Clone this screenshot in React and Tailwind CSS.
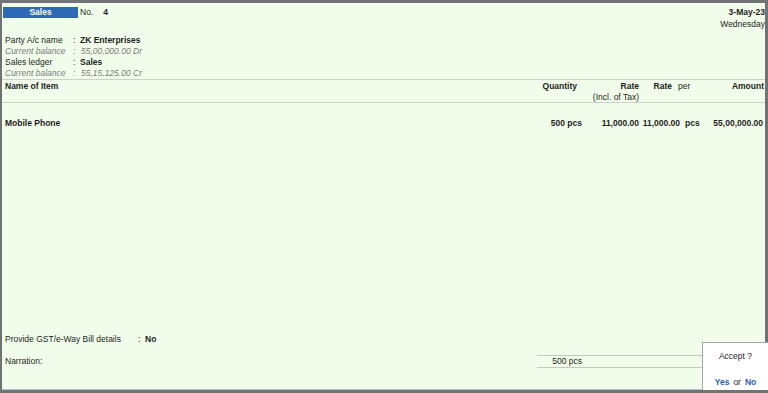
export default function App() {
  const line = "h-[11px] leading-[11px] whitespace-nowrap";

  return (
    <div
      className="relative w-[768px] h-[393px] bg-[#727272] pt-[3px] pl-[2px] pr-[3px] pb-[3px] text-[8.5px] text-[#1e1e1e]"
      style={{ fontFamily: '"Liberation Sans", Arial, sans-serif' }}
    >
      <div className="h-full flex flex-col bg-[#f1fdea] border-b border-[#a9c5d6]">
        {/* voucher header */}
        <div className="flex justify-between">
          <div className="flex items-start pt-[4px] pl-px">
            <div className="w-[75px] h-[11px] leading-[11px] bg-[#2e69b6] text-white font-bold text-center">
              Sales
            </div>
            <span className={`${line} ml-[2px]`}>No.</span>
            <span className={`${line} ml-[10px] font-bold`}>4</span>
          </div>
          <div className="flex flex-col items-end pt-[3px] leading-[12px]">
            <span className="font-bold">3-May-23</span>
            <span>Wednesday</span>
          </div>
        </div>

        {/* party details */}
        <div className="mt-[5px] border-b border-[#c9d2c6]">
          <div className="flex">
            <span className={`${line} w-[71px] pl-[3px]`}>Party A/c name</span>
            <span className={`${line} w-[7px]`}>:</span>
            <span className={`${line} font-bold`}>ZK Enterprises</span>
          </div>
          <div className="flex italic text-[#7c7c7c]">
            <span className={`${line} w-[71px] pl-[3px]`}>Current balance</span>
            <span className={`${line} w-[7px]`}>:</span>
            <span className={`${line} pl-px`}>55,00,000.00 Dr</span>
          </div>
          <div className="flex">
            <span className={`${line} w-[71px] pl-[3px]`}>Sales ledger</span>
            <span className={`${line} w-[7px]`}>:</span>
            <span className={`${line} font-bold`}>Sales</span>
          </div>
          <div className="flex italic text-[#7c7c7c]">
            <span className={`${line} w-[71px] pl-[3px]`}>Current balance</span>
            <span className={`${line} w-[7px]`}>:</span>
            <span className={`${line} pl-px`}>55,15,125.00 Cr</span>
          </div>
        </div>

        {/* column headings */}
        <div className="flex h-[23px] pt-px border-b border-[#c9d2c6] font-bold">
          <div className={`${line} flex-1 pl-[3px]`}>Name of Item</div>
          <div className={`${line} w-[62px] text-right pr-[5px]`}>Quantity</div>
          <div className="w-[58px] flex flex-col items-end pr-px">
            <span className={line}>Rate</span>
            <span className={`${line} font-normal`}>(Incl. of Tax)</span>
          </div>
          <div className={`${line} w-[40px] text-right pr-[8px]`}>Rate</div>
          <div className={`${line} w-[32px] font-normal -ml-[3px] pl-px`}>per</div>
          <div className={`${line} w-[56px] text-right pr-px`}>Amount</div>
        </div>

        {/* item row */}
        <div className="flex mt-[15px] font-bold">
          <div className={`${line} flex-1 pl-[3px]`}>Mobile Phone</div>
          <div className={`${line} w-[62px] text-right`}>500 pcs</div>
          <div className={`${line} w-[58px] text-right pr-px`}>11,000.00</div>
          <div className={`${line} w-[40px] text-right`}>11,000.00</div>
          <div className={`${line} w-[29px] pl-[5px]`}>pcs</div>
          <div className={`${line} w-[56px] text-right pr-[2px]`}>55,00,000.00</div>
        </div>

        <div className="flex-1" />

        {/* footer */}
        <div className="flex">
          <span className={`${line} w-[136px] pl-[3px]`}>Provide GST/e-Way Bill details</span>
          <span className={`${line} w-[7px]`}>:</span>
          <span className={`${line} font-bold`}>No</span>
        </div>
        <div className="flex mt-[10px] mb-[21px]">
          <span className="flex-1 h-[12px] leading-[12px] pl-[3px]">Narration:</span>
          <div className="w-[228px] h-[13px] border-y border-[#c2cbc0] flex">
            <span className="w-[45px] leading-[11px] text-right">500 pcs</span>
          </div>
        </div>
      </div>

      {/* accept prompt */}
      <div className="absolute right-0 top-[342px] w-[66px] h-[48px] bg-white border border-r-0 border-b-0 border-[#a6a6a6] flex flex-col items-center">
        <span className="mt-[7px] leading-[12px]">Accept ?</span>
        <span className="mt-[14px] leading-[12px]">
          <span className="font-bold text-[#2a5fb0]">Yes</span>
          <span className="mx-[4px]">or</span>
          <span className="font-bold text-[#2a5fb0]">No</span>
        </span>
      </div>
    </div>
  );
}
